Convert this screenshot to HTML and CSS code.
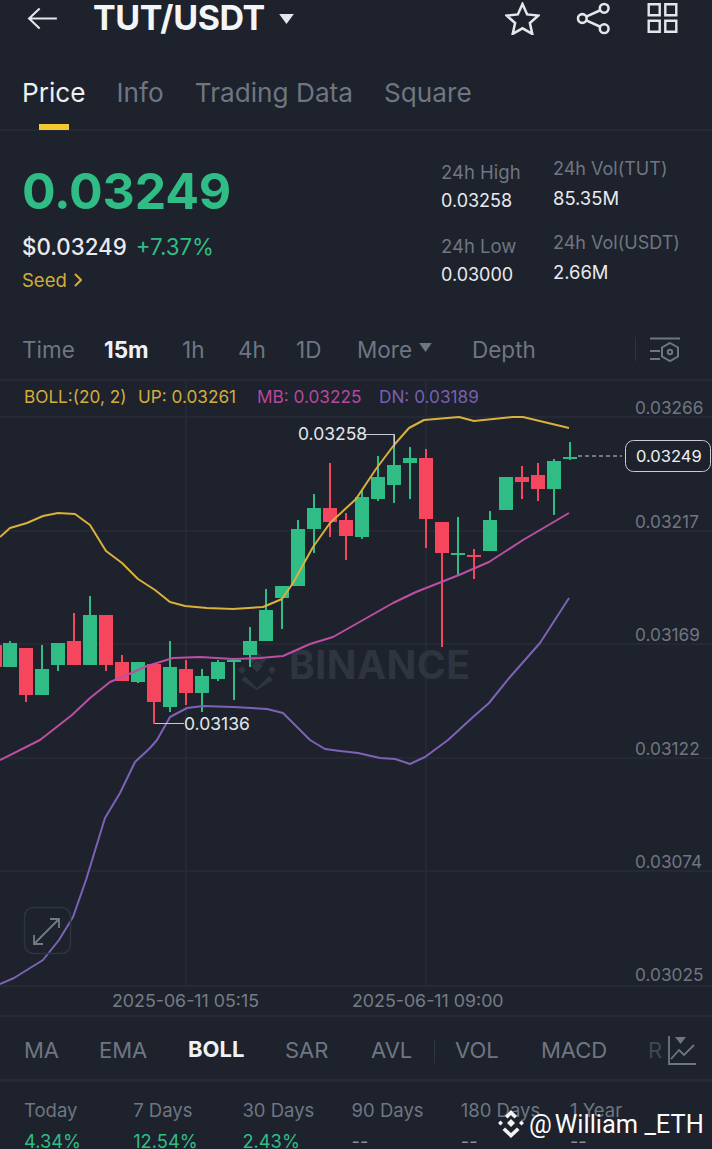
FILE: index.html
```html
<!DOCTYPE html>
<html lang="en">
<head>
<meta charset="utf-8">
<title>TUT/USDT</title>
<link rel="stylesheet" href="styles.css">
</head>
<body>
<main class="screen">
  <header class="topbar">
    <svg class="ico-back" viewBox="0 0 32 24"><path d="M31 12H2M13 1.500L2 12l11 10.500"/></svg>
    <h1 class="pair">TUT/USDT</h1>
    <svg class="ico-caret" viewBox="0 0 18 12"><path d="M1 1h16l-8 11z"/></svg>
    <div class="top-actions">
      <svg class="ico-star" viewBox="0 0 36 34"><path d="M18 2l4.800 10.800 11.400 1.200-8.600 7.700 2.500 11.200L18 27.100 7.900 32.900l2.500-11.200L1.800 14l11.400-1.200z"/></svg>
      <svg class="ico-share" viewBox="0 0 36 34"><circle cx="29" cy="6.500" r="4.500"/><circle cx="29" cy="27.500" r="4.500"/><circle cx="6.500" cy="17" r="4.500"/><path d="M25 8.500L10.500 15M25 25.500L10.500 19"/></svg>
      <svg class="ico-grid" viewBox="0 0 30 30"><path d="M1.200 1.200h11v11h-11zM17.800 1.200h11v11h-11zM1.200 17.800h11v11h-11zM17.800 17.800h11v11h-11z"/></svg>
    </div>
  </header>

  <nav class="tabs">
    <span class="tab active">Price</span>
    <span class="tab">Info</span>
    <span class="tab">Trading Data</span>
    <span class="tab">Square</span>
  </nav>

  <section class="summary">
    <div class="quote">
      <div class="last">0.03249</div>
      <div class="fiat"><span>$0.03249</span><span class="chg">+7.37%</span></div>
      <div class="tag">Seed <svg class="ico-chev" viewBox="0 0 8 14"><path d="M1 1l6 6-6 6"/></svg></div>
    </div>
    <div class="stats">
      <div class="stat-col stat-a">
        <dl><dt>24h High</dt><dd>0.03258</dd></dl>
        <dl><dt>24h Low</dt><dd>0.03000</dd></dl>
      </div>
      <div class="stat-col stat-b">
        <dl><dt>24h Vol(TUT)</dt><dd>85.35M</dd></dl>
        <dl><dt>24h Vol(USDT)</dt><dd>2.66M</dd></dl>
      </div>
    </div>
  </section>

  <nav class="periods">
    <span class="p-time">Time</span>
    <span class="p-15 on">15m</span>
    <span class="p-1h">1h</span>
    <span class="p-4h">4h</span>
    <span class="p-1d">1D</span>
    <span class="p-more">More</span>
    <svg class="ico-more" viewBox="0 0 14 10"><path d="M0 0h14L7 10z"/></svg>
    <span class="p-depth">Depth</span>
    <i class="p-div"></i>
    <svg class="ico-set" viewBox="0 0 30 26"><path d="M0 1.500h30M0 14h10M0 22h10"/><path d="M20 6l8 4.500v9L20 24l-8-4.500v-9z"/><circle cx="20" cy="15" r="2.200"/></svg>
  </nav>

  <section class="chart">
    <div class="legend">
      <span class="l-boll">BOLL:(20, 2)</span>
      <span class="l-up">UP: 0.03261</span>
      <span class="l-mb">MB: 0.03225</span>
      <span class="l-dn">DN: 0.03189</span>
    </div>
    <svg class="plot" viewBox="0 381 712 604">
      <path class="grid" d="M0 417H712M0 531H712M0 644H712M0 758H712M0 871H712M186 381V985M426 381V985"/>
      <text class="wm-text" x="289" y="679">BINANCE</text>
      <path class="wm-logo" d="M260 651l9 9-4 4-5-5-5 5-4-4zM245 666l4 4-4 4-4-4zM275 666l4 4-4 4-4-4zM260 660l6 6-6 6-6-6zM248 676l12 12 12-12 4 4-16 10-16-10z"/>

      <path class="wick up" d="M10 641V667M42 645V695M58 665V671M90 596V665M138 682V683M170 641V712M202 669V712M218 660V681M234 661V700M250 627V667M266 589V641M282 598V629M298 520V586M314 494V553M362 490V539M378 456V501M394 435V503M410 447V499M458 517V575M490 511V551M554 459V515M570 442V460"/>
      <path class="body up" d="M3 643h14v24H3zM35 669h14v26H35zM51 643h14v22H51zM83 615h14v50H83zM131 662h14v20h-14zM163 667h14v40h-14zM195 676h14v17h-14zM211 662h14v17h-14zM227 660h14v2h-14zM243 641h14v14h-14zM259 610h14v31h-14zM275 586h14v12h-14zM291 529h14v57h-14zM307 508h14v21h-14zM355 497h14v40h-14zM371 477h14v22h-14zM387 465h14v20h-14zM403 458h14v5h-14zM451 553h14v2h-14zM483 520h14v31h-14zM499 477h14v33h-14zM547 461h14v28h-14zM563 457h14v2h-14z"/>
      <path class="wick down" d="M26 695V702M74 613V641M106 665V671M122 655V662M154 702V724M186 660V705M330 463V537M346 513V560M426 449V548M442 553V647M474 549V579M522 466V499M538 463V501"/>
      <path class="body down" d="M-13 645h15v22h-15zM19 648h14v47H19zM67 641h14v24H67zM99 615h14v50H99zM115 662h14v19h-14zM147 664h14v38h-14zM179 669h14v24h-14zM323 508h14v14h-14zM339 520h14v16h-14zM419 458h14v61h-14zM435 522h14v31h-14zM467 555h14v2h-14zM515 477h14v5h-14zM531 475h14v14h-14z"/>

      <polyline class="band b-up" points="0,537 10,528 27,523 43,516 58,513 75,514 90,525 106,551 122,563 138,579 155,590 170,602 185,606 207,608 233,609 263,607 282,599 293,583 313,547 330,523 356,499 376,469 394,445 409,428 424,420 459,417 474,421 513,417 523,417 569,428"/>
      <polyline class="band b-mb" points="0,760 40,740 72,715 90,698 110,682 127,675 147,666 173,658 200,657 233,659 260,658 283,656 310,644 333,637 356,624 393,603 416,592 459,575 489,562 523,540 569,513"/>
      <polyline class="band b-dn" points="0,984 14,978 43,960 59,940 73,917 86,880 105,818 120,793 135,762 150,748 157,740 170,717 187,708 203,706 233,707 267,709 283,713 310,740 325,749 340,751 358,753 380,758 395,759 410,764 425,757 448,740 473,717 489,703 510,677 540,643 569,598"/>

      <path class="hi-lead" d="M365 434.500H394.500V447M155 723.500H184"/>
      <text class="mark" x="298" y="440">0.03258</text>
      <text class="mark" x="184" y="730">0.03136</text>

      <text class="axis" x="635" y="414">0.03266</text>
      <text class="axis" x="635" y="528">0.03217</text>
      <text class="axis" x="635" y="641">0.03169</text>
      <text class="axis" x="635" y="755">0.03122</text>
      <text class="axis" x="635" y="868">0.03074</text>
      <text class="axis" x="635" y="981">0.03025</text>

      <path class="dash" d="M578 456H622"/>
      <rect class="now-box" x="625.500" y="440.500" width="85" height="31" rx="8"/>
      <text class="now" x="636" y="462">0.03249</text>

      <rect class="exp-box" x="24.500" y="907.500" width="46" height="46" rx="9"/>
      <path class="exp" d="M34 944L59 919M34 935V944H43M50 919H59V928"/>
    </svg>
  </section>

  <div class="times">
    <span class="t-a">2025-06-11 05:15</span>
    <span class="t-b">2025-06-11 09:00</span>
  </div>

  <nav class="indicators">
    <span class="i-ma">MA</span>
    <span class="i-ema">EMA</span>
    <span class="i-boll on">BOLL</span>
    <span class="i-sar">SAR</span>
    <span class="i-avl">AVL</span>
    <i class="i-div"></i>
    <span class="i-vol">VOL</span>
    <span class="i-macd">MACD</span>
    <span class="i-r">R</span>
    <svg class="ico-ind" viewBox="0 0 28 29"><path class="s" d="M1 0V28H28M3 23L11 14l5 5L26 9"/><path class="f" d="M7 1h11l-5.500 7z"/></svg>
  </nav>

  <section class="perf">
    <div><span class="k">Today</span><span class="v g">4.34%</span></div>
    <div><span class="k">7 Days</span><span class="v g">12.54%</span></div>
    <div><span class="k">30 Days</span><span class="v g">2.43%</span></div>
    <div><span class="k">90 Days</span><span class="v">--</span></div>
    <div><span class="k">180 Days</span><span class="v">--</span></div>
    <div><span class="k">1 Year</span><span class="v">--</span></div>
  </section>

  <div class="credit">
    <svg class="ico-bnb" viewBox="0 0 28 28"><path d="M14 0l6 6-2.500 2.500L14 5l-3.500 3.500L8 6zM3.500 10.500L6 13 3.500 15.500 1 13zM24.500 10.500L27 13l-2.500 2.500L22 13zM14 9l4 4-4 4-4-4zM8 17.500l6 5.500 6-5.500 2.500 2.500-8.500 8-8.500-8z"/></svg>
    <span>@</span><span class="who">William _ETH</span>
  </div>
</main>
</body>
</html>
```
FILE: styles.css
```css
* { box-sizing: border-box; }
html, body { margin: 0; padding: 0; }
body {
  background: #1d222c;
  color: #eaecef;
  font-family: Inter, "Liberation Sans", sans-serif;
}
.screen {
  position: relative;
  width: 712px;
  height: 1149px;
  overflow: hidden;
}

/* top bar */
.topbar {
  display: flex;
  align-items: center;
  height: 36px;
  padding-left: 27px;
}
.topbar svg { fill: none; stroke: #e4e6ea; }
.ico-back { width: 31px; height: 23px; stroke-width: 2.200; margin-right: 35px; }
.pair { margin: 0; font-size: 34px; font-weight: 700; color: #f4f5f7; letter-spacing: -.4px; line-height: 36px; }
.topbar .ico-caret { width: 17px; height: 11px; margin-left: 13px; fill: #e4e6ea; stroke: none; }
.top-actions { margin-left: auto; display: flex; align-items: center; gap: 36px; padding-right: 34px; }
.ico-star { width: 35px; height: 33px; stroke-width: 2.600; }
.ico-share { width: 35px; height: 33px; stroke-width: 2.600; }
.ico-grid { width: 31px; height: 30px; stroke-width: 2.400; }

/* tabs */
.tabs {
  display: flex;
  align-items: center;
  gap: 31px;
  height: 95px;
  padding: 20px 0 0 22px;
  border-bottom: 2px solid #252a34;
}
.tab { position: relative; font-size: 26.200px; color: #6f7682; line-height: 30px; }
.tab.active { color: #eef0f3; }
.tab.active::after {
  content: "";
  position: absolute;
  left: 17px;
  top: 46px;
  width: 30px;
  height: 6px;
  background: #f3c92f;
}

/* summary */
.summary {
  display: flex;
  height: 199px;
}
.quote { width: 441px; padding: 30px 0 0 22px; }
.last { font-size: 50px; line-height: 60px; font-weight: 700; color: #2fbd85; letter-spacing: -.2px; }
.fiat { display: flex; gap: 9px; margin-top: 13px; font-size: 22.300px; line-height: 26px; color: #e8eaee; font-weight: 500; }
.chg { color: #2fbd85; font-weight: 400; }
.tag { display: flex; align-items: center; gap: 7px; margin-top: 8px; font-size: 18.500px; line-height: 24px; color: #d4ae3a; }
.ico-chev { width: 8px; height: 14px; fill: none; stroke: #d4ae3a; stroke-width: 2; }
.stats { display: flex; }
.stat-col { display: flex; flex-direction: column; gap: 19px; }
.stat-a { width: 112px; padding-top: 28px; }
.stat-b { padding-top: 25px; }
dl { margin: 0; }
dt { font-size: 18.500px; line-height: 26px; color: #6f7682; }
.stat-b dt { font-size: 18px; }
dd { margin: 3px 0 0; font-size: 18px; line-height: 26px; color: #e8eaee; }
.stat-b dd { font-size: 18.400px; }

/* periods */
.periods {
  position: relative;
  height: 51px;
  font-size: 22.500px;
  color: #6f7682;
  border-bottom: 2px solid #252a34;
}
.periods span, .periods svg, .p-div { position: absolute; }
.periods span { top: 6px; line-height: 28px; }
.periods .on { color: #f0f1f4; font-weight: 700; }
.p-time { left: 22px; }
.p-15 { left: 104px; }
.p-1h { left: 182px; }
.p-4h { left: 238px; }
.p-1d { left: 296px; }
.p-more { left: 357px; }
.ico-more { left: 419px; top: 13px; width: 13px; height: 9px; fill: #6f7682; }
.p-depth { left: 472px; }
.p-div { left: 635px; top: 7px; width: 1px; height: 24px; background: #2f3540; }
.ico-set { left: 650px; top: 7px; width: 30px; height: 26px; fill: none; stroke: #6f7682; stroke-width: 2; }

/* chart */
.chart {
  position: relative;
  height: 604px;
  border-bottom: 0;
}
.legend { position: absolute; left: 0; top: 5px; width: 100%; font-size: 17.200px; line-height: 22px; }
.legend span { position: absolute; top: 0; white-space: nowrap; }
.l-boll { left: 24px; color: #d4ae3a; }
.l-up { left: 138px; color: #d4ae3a; }
.l-mb { left: 257px; color: #b8479d; }
.l-dn { left: 379px; color: #7a5fb0; }
.plot { display: block; width: 712px; height: 604px; }
.grid { stroke: #272c37; stroke-width: 1.500; fill: none; }
.wm-text { font-size: 39px; font-weight: 700; fill: #2f3540; letter-spacing: .5px; }
.wm-logo { fill: #2f3540; transform: translateX(-3px); }
.wick { fill: none; stroke-width: 2; }
.wick.up { stroke: #2fbd85; }
.wick.down { stroke: #f6465d; }
.body.up { fill: #2fbd85; }
.body.down { fill: #f6465d; }
.band { fill: none; stroke-width: 2; stroke-linejoin: round; }
.b-up { stroke: #d9b13b; }
.b-mb { stroke: #bd4fa3; }
.b-dn { stroke: #7d62b8; }
.hi-lead { fill: none; stroke: #c9ccd1; stroke-width: 1; }
.mark { font-size: 17.500px; fill: #e4e6ea; }
.axis { font-size: 17.300px; fill: #6f7682; }
.dash { stroke: #c9ccd1; stroke-width: 1; stroke-dasharray: 4 3; }
.now-box { fill: #1d222c; stroke: #c9ccd1; stroke-width: 1; }
.now { font-size: 16.500px; fill: #f0f1f4; }
.exp-box { fill: none; stroke: #2f3540; stroke-width: 1.500; }
.exp { fill: none; stroke: #747b86; stroke-width: 1.800; }

/* time axis */
.times {
  position: relative;
  height: 32px;
  border-top: 2px solid #252a34;
  border-bottom: 2px solid #252a34;
  font-size: 17.800px;
  color: #767c87;
}
.times span { position: absolute; top: 3px; line-height: 22px; white-space: nowrap; }
.t-a { left: 112px; }
.t-b { left: 352px; }

/* indicators */
.indicators {
  position: relative;
  height: 65px;
  font-size: 22px;
  color: #6f7682;
  border-bottom: 3px solid #252a34;
}
.indicators span, .indicators svg, .i-div { position: absolute; }
.indicators span { top: 19px; line-height: 28px; white-space: nowrap; }
.indicators .on { color: #f0f1f4; font-weight: 700; top: 18px; }
.i-ma { left: 24px; }
.i-ema { left: 99px; }
.i-boll { left: 188px; }
.i-sar { left: 285px; }
.i-avl { left: 371px; }
.i-div { left: 434px; top: 22px; width: 1px; height: 24px; background: #2f3540; }
.i-vol { left: 455px; }
.i-macd { left: 541px; }
.i-r { left: 648px; color: #424853; }
.ico-ind { left: 668px; top: 19px; width: 28px; height: 29px; }
.ico-ind .s { fill: none; stroke: #6f7682; stroke-width: 1.800; }
.ico-ind .f { fill: #6f7682; }

/* performance */
.perf {
  display: grid;
  grid-template-columns: repeat(6, 109.200px);
  padding: 16px 0 0 24px;
}
.perf div { display: flex; flex-direction: column; gap: 7px; }
.k { font-size: 18.500px; line-height: 24px; color: #6f7682; white-space: nowrap; }
.v { font-size: 18.300px; line-height: 24px; color: #8a909a; }
.v.g { color: #2fbd85; }

/* watermark */
.credit {
  position: absolute;
  left: 497px;
  top: 1109px;
  display: flex;
  align-items: center;
  color: #fbfbfb;
  font-family: Roboto, "Liberation Sans", sans-serif;
  font-size: 25.400px;
  line-height: 30px;
  white-space: nowrap;
}
.ico-bnb { width: 28px; height: 28px; fill: #f4f4f4; margin-right: 4px; }
.who { margin-left: 3px; }
```
